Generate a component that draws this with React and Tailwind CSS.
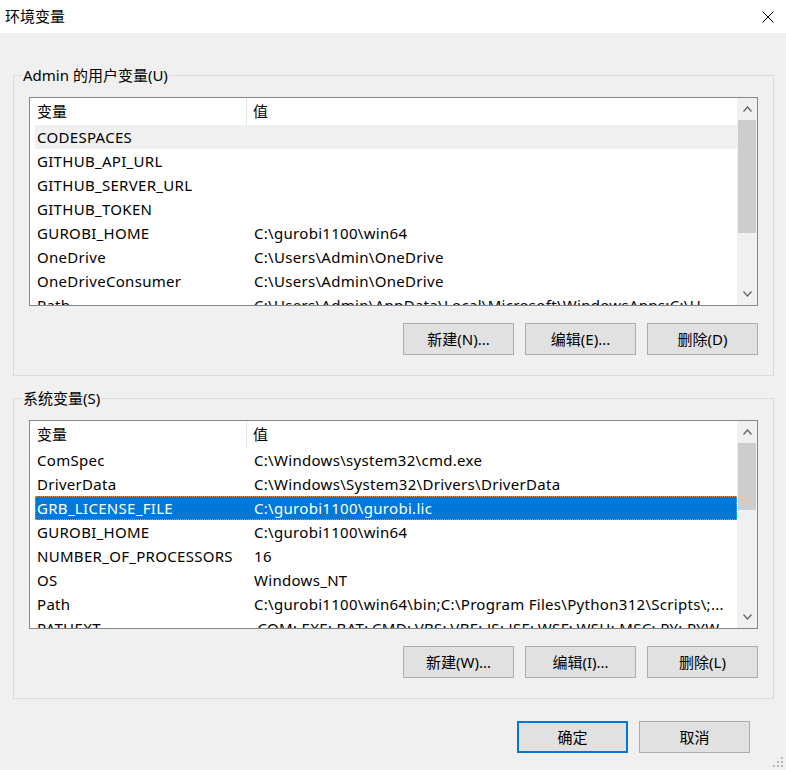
import React from "react";

const userVars = [
  ["CODESPACES", ""],
  ["GITHUB_API_URL", ""],
  ["GITHUB_SERVER_URL", ""],
  ["GITHUB_TOKEN", ""],
  ["GUROBI_HOME", "C:\\gurobi1100\\win64"],
  ["OneDrive", "C:\\Users\\Admin\\OneDrive"],
  ["OneDriveConsumer", "C:\\Users\\Admin\\OneDrive"],
  ["Path", "C:\\Users\\Admin\\AppData\\Local\\Microsoft\\WindowsApps;C:\\U..."],
];

const sysVars = [
  ["ComSpec", "C:\\Windows\\system32\\cmd.exe"],
  ["DriverData", "C:\\Windows\\System32\\Drivers\\DriverData"],
  ["GRB_LICENSE_FILE", "C:\\gurobi1100\\gurobi.lic"],
  ["GUROBI_HOME", "C:\\gurobi1100\\win64"],
  ["NUMBER_OF_PROCESSORS", "16"],
  ["OS", "Windows_NT"],
  ["Path", "C:\\gurobi1100\\win64\\bin;C:\\Program Files\\Python312\\Scripts\\;..."],
  ["PATHEXT", ".COM;.EXE;.BAT;.CMD;.VBS;.VBE;.JS;.JSE;.WSF;.WSH;.MSC;.PY;.PYW"],
];

function Chevron({ up }) {
  return (
    <svg width="9" height="6" viewBox="0 0 9 6">
      <polyline
        points={up ? "0.5,5.5 4.5,1 8.5,5.5" : "0.5,0.5 4.5,5 8.5,0.5"}
        fill="none"
        stroke="#606060"
        strokeWidth="1.2"
      />
    </svg>
  );
}

function Btn({ children, primary }) {
  return (
    <button
      className={`w-[111px] h-[32px] flex items-center justify-center bg-[#e1e1e1] text-black ${
        primary ? "border-2 border-[#0078d7]" : "border border-[#adadad]"
      }`}
    >
      {children}
    </button>
  );
}

function VarList({ rows, hover, selected, thumbHeight }) {
  return (
    <div className="w-[729px] h-[209px] border border-[#828790] bg-white flex overflow-hidden">
      <div className="flex-1 pl-[5px] overflow-hidden">
        <div className="flex h-[27px] items-center">
          <div className="w-[212px] pl-[2px] h-full flex items-center border-r border-[#e5e5e5]">变量</div>
          <div className="pl-[6px]">值</div>
        </div>
        {rows.map(([name, value], i) => (
          <div
            key={name + i}
            className={`flex h-[24px] items-center whitespace-nowrap tracking-[0.3px] ${
              i === selected
                ? "bg-[#0078d7] text-white border border-dotted border-[#d8955a]"
                : i === hover
                ? "bg-[#f0f0f0] border border-transparent"
                : "border border-transparent"
            }`}
          >
            <div className="w-[218px] pl-[1px] shrink-0">{name}</div>
            <div className="overflow-hidden">{value}</div>
          </div>
        ))}
      </div>
      <div className="w-[20px] bg-[#f0f0f0] flex flex-col shrink-0">
        <div className="h-[22px] flex items-center justify-center">
          <Chevron up />
        </div>
        <div className="flex-1">
          <div className="mx-[1px] bg-[#cdcdcd]" style={{ height: thumbHeight }} />
        </div>
        <div className="h-[22px] flex items-center justify-center">
          <Chevron />
        </div>
      </div>
    </div>
  );
}

function Group({ label, children }) {
  return (
    <div className="relative mx-[13px] w-[761px] border border-[#dcdcdc] pt-[21px] pb-[20px] px-[15px]">
      <div className="absolute left-[8px] top-[-11px] px-[1px] bg-[#f0f0f0] leading-[20px]">{label}</div>
      {children}
    </div>
  );
}

export default function App() {
  return (
    <div
      className="w-[786px] h-[770px] bg-[#f0f0f0] text-black text-[15px] relative overflow-hidden"
      style={{ fontFamily: '"Noto Sans", "Noto Sans CJK SC", sans-serif' }}
    >
      {/* 标题栏 */}
      <div className="h-[33px] bg-white flex items-center justify-between pl-[5px] pr-[12px]">
        <span className="text-[15px]">环境变量</span>
        <svg width="12" height="12" viewBox="0 0 12 12">
          <path d="M0.5 0.5 L11.5 11.5 M11.5 0.5 L0.5 11.5" stroke="#000" strokeWidth="1" />
        </svg>
      </div>

      <div className="pt-[42px]">
        <Group label="Admin 的用户变量(U)">
          <VarList rows={userVars} hover={0} thumbHeight={113} />
          <div className="flex justify-end gap-[11px] mt-[17px]">
            <Btn>新建(N)...</Btn>
            <Btn>编辑(E)...</Btn>
            <Btn>删除(D)</Btn>
          </div>
        </Group>

        <div className="h-[22px]" />

        <Group label="系统变量(S)">
          <VarList rows={sysVars} selected={2} thumbHeight={67} />
          <div className="flex justify-end gap-[11px] mt-[17px]">
            <Btn>新建(W)...</Btn>
            <Btn>编辑(I)...</Btn>
            <Btn>删除(L)</Btn>
          </div>
        </Group>

        <div className="flex justify-end gap-[11px] mt-[22px] pr-[36px]">
          <Btn primary>确定</Btn>
          <Btn>取消</Btn>
        </div>
      </div>

      {/* 尺寸调整手柄 */}
      <svg className="absolute right-[2px] bottom-[2px]" width="12" height="12" viewBox="0 0 12 12">
        {[
          [10, 2], [10, 6], [6, 6], [10, 10], [6, 10], [2, 10],
        ].map(([x, y]) => (
          <rect key={x + "-" + y} x={x - 1} y={y - 1} width="2" height="2" fill="#b8b8b8" />
        ))}
      </svg>
    </div>
  );
}
